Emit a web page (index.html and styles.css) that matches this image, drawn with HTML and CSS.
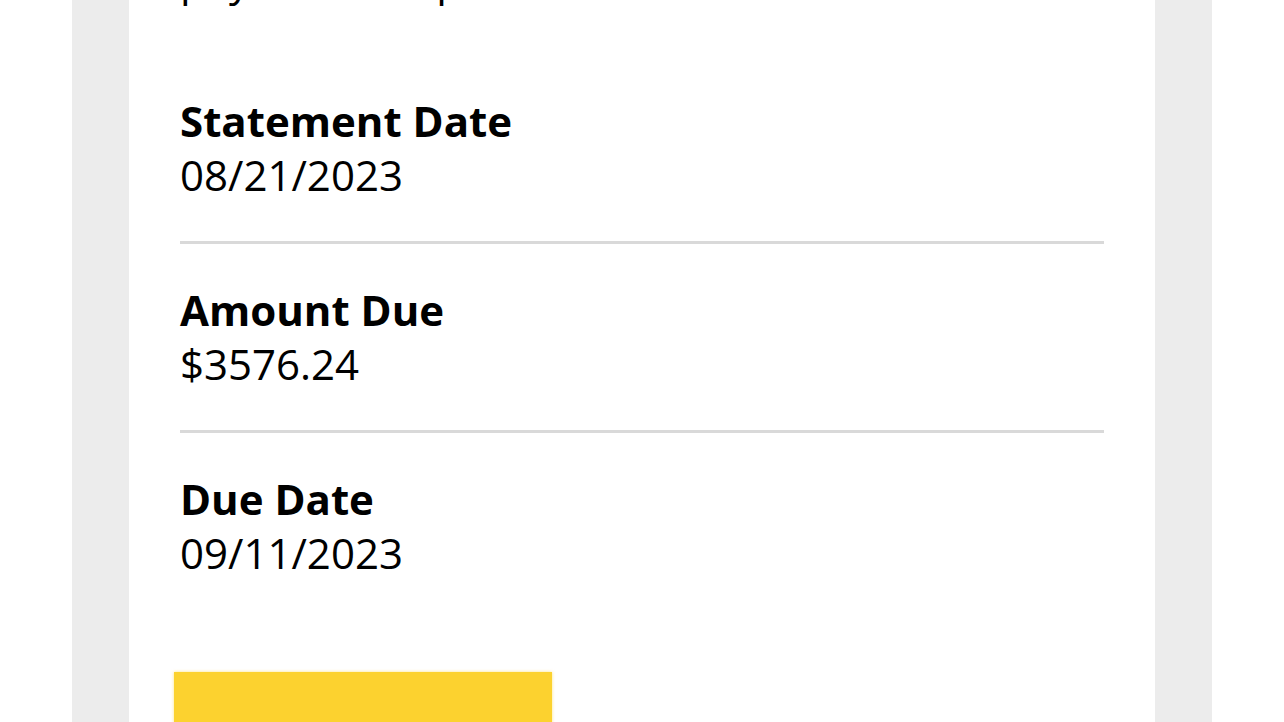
FILE: index.html
```html
<!DOCTYPE html>
<html lang="en">
<head>
<meta charset="utf-8">
<title>Statement</title>
<link rel="stylesheet" href="styles.css">
</head>
<body>
<div class="page">
  <div class="card">
    <p class="intro">pay the total prior to the due date.</p>
    <div class="item">
      <div class="label">Statement Date</div>
      <div class="value">08/21/2023</div>
    </div>
    <div class="item">
      <div class="label">Amount Due</div>
      <div class="value">$3576.24</div>
    </div>
    <div class="item last">
      <div class="label">Due Date</div>
      <div class="value">09/11/2023</div>
    </div>
    <div class="btn"></div>
  </div>
</div>
</body>
</html>
```
FILE: styles.css
```css
html, body {
  margin: 0;
  padding: 0;
  background: #ffffff;
  height: 100%;
  overflow: hidden;
}
body {
  font-family: "Open Sans", "Noto Sans", sans-serif;
  color: #000;
}
.page {
  margin: 0 72px;
  height: 100%;
  background: #ececec;
  padding: 0 57px;
  overflow: hidden;
}
.card {
  background: #fff;
  margin-top: -47px;
  padding: 0 51px;
  height: 900px;
}
.intro {
  margin: 0 0 87px;
  font-size: 42px;
  line-height: 54px;
  white-space: nowrap;
}
.item {
  padding-bottom: 39px;
  border-bottom: 3px solid #d9d9d9;
  margin-bottom: 39px;
}
.item.last {
  border-bottom: none;
  padding-bottom: 0;
  margin-bottom: 92px;
}
.label {
  font-size: 42px;
  line-height: 54px;
  font-weight: 700;
}
.value {
  font-size: 42px;
  line-height: 54px;
}
.btn {
  margin-left: -6px;
  width: 378px;
  height: 80px;
  background: #fcd22f;
  box-shadow: 0 0 3px rgba(252, 210, 47, 0.6);
}
```
